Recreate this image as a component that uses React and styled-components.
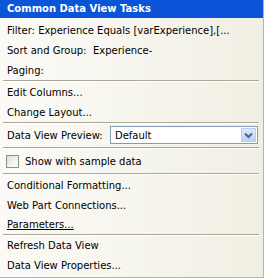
import React from "react";
import styled, { createGlobalStyle } from "styled-components";

const Global = createGlobalStyle`
  html, body { margin: 0; padding: 0; background: #ffffff; }
  body { font-family: "DejaVu Sans", "Liberation Sans", Arial, sans-serif; }
`;

const Panel = styled.div`
  width: 263px;
  height: 277px;
  border-right: 1px solid #b8b5a6;
  border-bottom: 1px solid #b8b5a6;
  background: linear-gradient(to right, #fbfaf6 0%, #f6f5ee 50%, #f1efe3 100%);
  display: flex;
  flex-direction: column;
  font-size: 10px;
  color: #000;
  overflow: hidden;
`;

const Header = styled.div`
  height: 18px;
  background: linear-gradient(to right, #0b55d9, #0a52d6);
  color: #fff;
  font-weight: bold;
  font-size: 10px;
  line-height: 18px;
  padding-left: 7px;
  flex: none;
`;

const Section = styled.div`
  display: flex;
  flex-direction: column;
  padding-top: ${(p) => p.$pt || 0}px;
  padding-bottom: ${(p) => p.$pb || 0}px;
  flex: none;
`;

const Row = styled.div`
  height: ${(p) => p.$h || 20}px;
  display: flex;
  align-items: center;
  padding-left: 7px;
  white-space: nowrap;
  text-decoration: ${(p) => (p.$link ? "underline" : "none")};
`;

const Label = styled.span`
  display: inline-block;
  width: ${(p) => p.$w}px;
  flex: none;
`;

const Separator = styled.div`
  height: 1px;
  margin: 0 4px 0 3px;
  background: #a9a797;
  box-shadow: 0 1px 0 #ffffff;
  flex: none;
`;

const SelectBox = styled.div`
  margin-left: auto;
  margin-right: 5px;
  width: 142px;
  height: 16px;
  border: 1px solid #7f9db9;
  background: #fff;
  display: flex;
  align-items: center;
  padding-left: 4px;
  box-sizing: content-box;
`;

const SelectText = styled.span`
  flex: 1;
`;

const DropButton = styled.div`
  width: 15px;
  height: 14px;
  margin-right: 1px;
  background: linear-gradient(to bottom, #dde8fd, #bdd0f8);
  border: 1px solid #bccdf2;
  box-sizing: border-box;
  display: flex;
  align-items: center;
  justify-content: center;
`;

const Check = styled.div`
  width: 13px;
  height: 13px;
  box-sizing: border-box;
  border: 1px solid #8f8f85;
  background: linear-gradient(135deg, #dcdcd6 0%, #f4f4f0 60%, #ffffff 100%);
  margin-left: -1px;
  margin-right: 6px;
`;

export default function App() {
  return (
    <>
      <Global />
      <Panel>
        <Header>Common Data View Tasks</Header>
        <Section $pt={2}>
          <Row>Filter: Experience Equals [varExperience],[...</Row>
          <Row>
            <Label $w={86}>Sort and Group:</Label>
            <span>Experience-</span>
          </Row>
          <Row>Paging:</Row>
        </Section>
        <Separator />
        <Section $pt={1}>
          <Row>Edit Columns...</Row>
          <Row>Change Layout...</Row>
        </Section>
        <Separator />
        <Section $pt={3} $pb={3}>
          <Row $h={18}>
            <span>Data View Preview:</span>
            <SelectBox>
              <SelectText>Default</SelectText>
              <DropButton>
                <svg width="9" height="7" viewBox="0 0 9 7">
                  <path d="M1 1.5 L4.5 5 L8 1.5" fill="none" stroke="#4d6185" strokeWidth="2" />
                </svg>
              </DropButton>
            </SelectBox>
          </Row>
        </Section>
        <Separator />
        <Section $pt={1}>
          <Row $h={24}>
            <Check />
            <span>Show with sample data</span>
          </Row>
        </Section>
        <Separator />
        <Section $pt={1}>
          <Row>Conditional Formatting...</Row>
          <Row>Web Part Connections...</Row>
          <Row $link $h={19}>Parameters...</Row>
        </Section>
        <Separator />
        <Section $pt={0}>
          <Row>Refresh Data View</Row>
          <Row>Data View Properties...</Row>
        </Section>
      </Panel>
    </>
  );
}
